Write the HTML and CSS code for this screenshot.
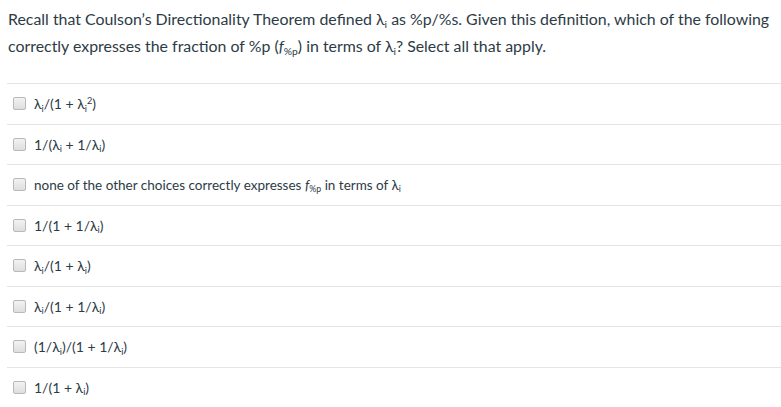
FILE: index.html
```html
<!DOCTYPE html>
<html>
<head>
<meta charset="utf-8">
<link rel="stylesheet" href="styles.css">
</head>
<body>
<div class="quiz">
  <div class="question">Recall that Coulson’s Directionality Theorem defined λ<sub>i</sub> as %p/%s. Given this definition, which of the following correctly expresses the fraction of %p (<i>f</i><sub>%p</sub>) in terms of λ<sub>i</sub>? Select all that apply.</div>
  <ul class="answers">
    <li class="answer"><span class="box"></span><span class="label">λ<sub>i</sub>/(1 + λ<sub>i</sub><sup>2</sup>)</span></li>
    <li class="answer"><span class="box"></span><span class="label">1/(λ<sub>i</sub> + 1/λ<sub>i</sub>)</span></li>
    <li class="answer"><span class="box"></span><span class="label text">none of the other choices correctly expresses <i>f</i><sub>%p</sub> in terms of λ<sub>i</sub></span></li>
    <li class="answer"><span class="box"></span><span class="label">1/(1 + 1/λ<sub>i</sub>)</span></li>
    <li class="answer"><span class="box"></span><span class="label">λ<sub>i</sub>/(1 + λ<sub>i</sub>)</span></li>
    <li class="answer"><span class="box"></span><span class="label">λ<sub>i</sub>/(1 + 1/λ<sub>i</sub>)</span></li>
    <li class="answer"><span class="box"></span><span class="label">(1/λ<sub>i</sub>)/(1 + 1/λ<sub>i</sub>)</span></li>
    <li class="answer"><span class="box"></span><span class="label">1/(1 + λ<sub>i</sub>)</span></li>
  </ul>
</div>
</body>
</html>
```

FILE: styles.css
```css
html, body {
  margin: 0;
  padding: 0;
  background: #ffffff;
}
body {
  font-family: Lato, "Open Sans", sans-serif;
  color: #2d3b45;
  overflow: hidden;
}
.quiz {
  padding-left: 7px;
}
.question {
  font-size: 15.9px;
  line-height: 27px;
  padding: 5px 0 0 1px;
  height: 83px;
  box-sizing: border-box;
}
sub, sup {
  font-size: 65%;
  line-height: 0;
  position: relative;
  vertical-align: baseline;
}
sub { bottom: -0.3em; }
sup { top: -0.55em; }
.answers {
  list-style: none;
  margin: 0;
  padding: 0;
}
.answer {
  display: flex;
  align-items: center;
  height: 39.5px;
  border-top: 1px solid #e4e4e4;
  font-size: 14px;
}
.label.text {
  font-size: 13.5px;
}
.box {
  width: 11px;
  height: 11px;
  border: 1px solid #b9b9b9;
  border-radius: 2px;
  background: linear-gradient(#f2f2f2, #dedede);
  margin: 0 8px 0 6px;
  flex: none;
}
```
